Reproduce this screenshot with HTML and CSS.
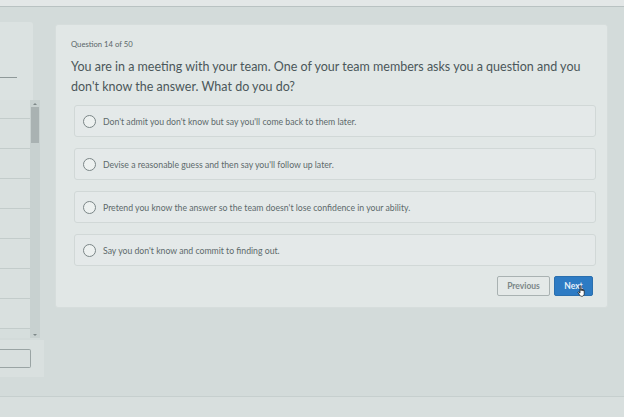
FILE: index.html
```
<!DOCTYPE html>
<html>
<head>
<meta charset="utf-8">
<link rel="stylesheet" href="styles.css">
</head>
<body>
<div class="topbar"></div>
<div class="main">
  <aside class="sidebar">
    <div class="side-head"><div class="side-rule"></div></div>
    <div class="side-list">
      <div class="rows">
        <div class="row row-first"></div>
        <div class="row"></div>
        <div class="row"></div>
        <div class="row"></div>
        <div class="row"></div>
        <div class="row"></div>
        <div class="row"></div>
        <div class="row"></div>
      </div>
      <div class="scroll">
        <span class="arrow up"></span>
        <div class="thumb"></div>
        <div class="track"></div>
        <span class="arrow down"></span>
      </div>
    </div>
    <div class="side-foot"><div class="side-box"></div></div>
  </aside>
  <section class="content">
    <div class="card">
      <div class="q-label">Question 14 of 50</div>
      <div class="q-text">You are in a meeting with your team. One of your team members asks you a question and you<br>don't know the answer. What do you do?</div>
      <div class="options">
        <label class="option"><span class="radio"></span><span class="opt-text">Don't admit you don't know but say you'll come back to them later.</span></label>
        <label class="option"><span class="radio"></span><span class="opt-text">Devise a reasonable guess and then say you'll follow up later.</span></label>
        <label class="option"><span class="radio"></span><span class="opt-text">Pretend you know the answer so the team doesn't lose confidence in your ability.</span></label>
        <label class="option"><span class="radio"></span><span class="opt-text">Say you don't know and commit to finding out.</span></label>
      </div>
      <div class="actions">
        <button class="btn btn-prev">Previous</button>
        <button class="btn btn-next">Next
          <svg class="cursor" width="10" height="12" viewBox="0 0 10 12"><path d="M3 1.2c0-.6.9-.6.9 0V5.5h.2V4.4c0-.6.9-.6.9 0v1.2h.2V4.9c0-.6.9-.6.9 0v.9h.2v-.5c0-.6.9-.6.9 0v3.4c0 1.3-.9 2.6-2.2 2.6H4.5c-.8 0-1.3-.4-1.8-1.1L1.1 7.6c-.3-.5.3-1 .7-.6L3 8.1z" fill="#fff" stroke="#111" stroke-width=".7" stroke-linejoin="round"/></svg>
        </button>
      </div>
    </div>
  </section>
</div>
<div class="footer"></div>
</body>
</html>
```
FILE: styles.css
```
* { box-sizing: border-box; }
html, body { margin: 0; padding: 0; }
body {
  width: 624px;
  height: 417px;
  overflow: hidden;
  background: #d3dbda;
  font-family: "Lato", "Open Sans", sans-serif;
  display: flex;
  flex-direction: column;
}
.topbar {
  height: 7px;
  background: #e3e7e7;
  border-bottom: 1px solid #b9c2c2;
  flex: none;
}
.main {
  display: flex;
  flex: 1;
  min-height: 0;
}
.sidebar {
  width: 44px;
  flex: none;
  display: flex;
  flex-direction: column;
  padding-top: 15px;
}
.side-head {
  width: 33px;
  height: 78px;
  background: #dbe2e1;
  border-radius: 0 3px 0 0;
  padding-top: 55px;
}
.side-rule {
  width: 17px;
  border-top: 1px solid #8f9999;
}
.side-list {
  display: flex;
  height: 238px;
}
.rows {
  width: 30px;
  background: #d6dedd;
  display: flex;
  flex-direction: column;
}
.row {
  height: 30px;
  border-bottom: 1px solid #c3cccb;
  background: #d9e0df;
}
.row-first { height: 19px; }
.scroll {
  width: 10px;
  background: #c8d1d0;
  display: flex;
  flex-direction: column;
  align-items: center;
}
.arrow {
  width: 0;
  height: 0;
  border-left: 2px solid transparent;
  border-right: 2px solid transparent;
  margin: 3px 0 2px;
}
.arrow.up { border-bottom: 2px solid #7d8787; }
.arrow.down { border-top: 2px solid #7d8787; }
.thumb {
  width: 8px;
  height: 36px;
  background: #a9b2b2;
}
.track { flex: 1; }
.side-foot {
  margin-top: 2px;
  width: 44px;
  height: 37px;
  background: #d9e0df;
  padding-top: 9px;
}
.side-box {
  width: 31px;
  height: 19px;
  border: 1px solid #9aa4a4;
  border-left: none;
  border-radius: 0 2px 2px 0;
  background: #d8dfde;
}
.content {
  flex: 1;
  padding: 17px 0 0 11px;
}
.card {
  width: 553px;
  background: #e1e7e6;
  border: 1px solid #d6dddc;
  border-radius: 3px;
  padding: 14px 11px 11px 15px;
}
.q-label {
  font-size: 7.7px;
  line-height: 11px;
  color: #5a6668;
}
.q-text {
  margin-top: 7px;
  font-size: 12.5px;
  line-height: 20px;
  color: #4b575a;
  white-space: nowrap;
}
.options {
  margin: 8px 0 0 3px;
  display: flex;
  flex-direction: column;
  gap: 11px;
}
.option {
  height: 32px;
  display: flex;
  align-items: center;
  gap: 7px;
  padding-left: 8px;
  background: #e4e9e9;
  border: 1px solid #d1d8d7;
  border-radius: 3px;
}
.radio {
  width: 13px;
  height: 13px;
  border: 1px solid #7b8687;
  border-radius: 50%;
  background: #edf1f0;
  flex: none;
}
.opt-text {
  font-size: 8.7px;
  color: #5d696b;
}
.actions {
  margin-top: 10px;
  display: flex;
  justify-content: flex-end;
  gap: 4px;
  padding-right: 3px;
}
.btn {
  height: 20px;
  font-family: "Lato", "Open Sans", sans-serif;
  font-size: 8.5px;
  font-weight: 700;
  border-radius: 2px;
  padding: 0;
}
.btn-prev {
  width: 53px;
  background: #e4e9e8;
  border: 1px solid #a9b2b2;
  color: #7b8687;
}
.btn-next {
  width: 39px;
  background: #2d7bc4;
  border: 1px solid #2a6fae;
  color: #e8f1f8;
  position: relative;
}
.cursor {
  position: absolute;
  left: 22px;
  top: 8px;
}
.footer {
  height: 21px;
  flex: none;
  border-top: 1px solid #c6cfce;
  background: #d8dfde;
}
```
